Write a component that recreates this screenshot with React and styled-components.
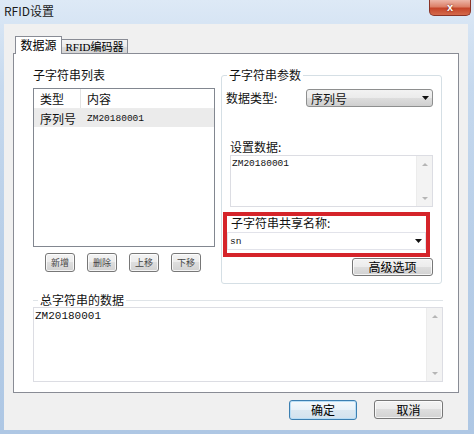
import React from 'react';
import styled, { createGlobalStyle } from 'styled-components';

const CJK = `"Noto Sans CJK SC", "Noto Sans", sans-serif`;
const MONO = `"Liberation Mono", "DejaVu Sans Mono", monospace`;
const SERIF = `"Liberation Serif", "Noto Sans CJK SC", serif`;

const GlobalStyle = createGlobalStyle`
  html, body { margin: 0; padding: 0; background: #b9cfe8; }
  body { font-family: ${CJK}; font-size: 12px; color: #000; }
  * { box-sizing: border-box; }
`;

const Window = styled.div`
  width: 474px;
  height: 434px;
  display: flex;
  flex-direction: column;
  overflow: hidden;
  background: linear-gradient(180deg, #dde9f6 0%, #c6d9ee 20%, #b6cde7 60%, #aec7e4 100%);
`;

const TitleBar = styled.div`
  height: 24px;
  flex: none;
  display: flex;
  justify-content: space-between;
  align-items: flex-start;
  padding-left: 4px;
`;

const Title = styled.div`
  font-family: ${CJK};
  font-size: 12px;
  line-height: 14px;
  margin-top: 4px;
  color: #1a1a1a;
`;

const CloseButton = styled.div`
  width: 42px;
  height: 16px;
  margin-right: 3px;
  border: 1px solid #8a3326;
  border-top: none;
  border-radius: 0 0 5px 5px;
  background: linear-gradient(180deg, #edb6a8 0%, #dc8068 45%, #c5452a 55%, #d46a4c 100%);
  color: #fff;
  font: bold 11px/15px "Liberation Sans", sans-serif;
  text-align: center;
  text-shadow: 0 0 2px #6a1a10;
`;

const Client = styled.div`
  flex: 1;
  margin: 0 6px 4px 4px;
  background: #f0f0f0;
  display: flex;
  flex-direction: column;
  padding: 12px 9px 0 9px;
`;

const TabRow = styled.div`
  display: flex;
  align-items: flex-end;
  height: 18px;
  padding-left: 2px;
  border-bottom: 1px solid #898c95;
`;

const Tab = styled.div`
  display: flex;
  align-items: center;
  justify-content: center;
  white-space: nowrap;
  width: ${p => p.$w}px;
  height: ${p => (p.$active ? 18 : 14)}px;
  margin-bottom: ${p => (p.$active ? -1 : 0)}px;
  border: 1px solid #898c95;
  border-bottom: none;
  ${p => (p.$active ? '' : 'border-left: none;')}
  background: ${p => (p.$active ? '#fff' : 'linear-gradient(180deg, #f3f3f3 0%, #ebebeb 50%, #dcdcdc 51%, #d4d4d4 100%)')};
  font-family: ${p => (p.$serif ? SERIF : CJK)};
  font-size: ${p => (p.$serif ? 11 : 12)}px;
  line-height: 14px;
  padding-bottom: ${p => (p.$active ? 1 : 0)}px;
`;

const TabPanel = styled.div`
  height: 339px;
  background: #fff;
  border: 1px solid #898c95;
  border-top: none;
  display: flex;
  flex-direction: column;
  padding: 14px 16px 10px 19px;
`;

const TopRow = styled.div`
  display: flex;
  align-items: flex-start;
  gap: 6px;
  height: 215px;
`;

const LeftColumn = styled.div`
  width: 182px;
  display: flex;
  flex-direction: column;
`;

const Label = styled.div`
  font-family: ${CJK};
  font-size: 12px;
  line-height: 14px;
  color: #111;
  ${p => (p.$width ? `width: ${p.$width}px; flex: none;` : '')}
`;

const ListBox = styled.div`
  margin-top: 6px;
  height: 159px;
  border: 1px solid #828790;
  background: #fff;
  display: flex;
  flex-direction: column;
`;

const ListRow = styled.div`
  display: grid;
  grid-template-columns: 47px 1fr;
  height: ${p => (p.$header ? 20 : 18)}px;
  align-items: center;
  background: ${p => (p.$selected ? '#ebebeb' : '#fff')};
  border-bottom: ${p => (p.$header ? '1px solid #ececec' : 'none')};
`;

const Cell = styled.div`
  height: 100%;
  display: flex;
  align-items: center;
  padding-left: 6px;
  font-family: ${p => (p.$mono ? MONO : CJK)};
  font-size: ${p => (p.$mono ? 9.5 : 12)}px;
  color: #111;
  border-right: ${p => (p.$divider ? '1px solid #e3e3e3' : 'none')};
`;

const ButtonRow = styled.div`
  display: flex;
  gap: 12px;
  margin-top: 6px;
  padding-left: 12px;
`;

const Button = styled.button`
  width: ${p => p.$w}px;
  height: ${p => p.$h}px;
  padding: 0;
  flex: none;
  font-family: ${CJK};
  font-size: ${p => p.$fs || 12}px;
  line-height: 1;
  color: ${p => (p.$fs ? '#444' : '#000')};
  border: 1px solid ${p => (p.$default ? '#3c7fb1' : '#777')};
  border-radius: 3px;
  background: ${p =>
    p.$default
      ? 'linear-gradient(180deg, #f4f9fc 0%, #e8f2f9 49%, #dbe8f1 50%, #d2e2ee 100%)'
      : 'linear-gradient(180deg, #f3f3f3 0%, #ececec 49%, #dedede 50%, #d2d2d2 100%)'};
  box-shadow: inset 0 0 0 1px ${p => (p.$default ? 'rgba(180,220,245,.9)' : 'rgba(255,255,255,.75)')};
  ${p => (p.$alignEnd ? 'align-self: flex-end; margin-right: 8px; margin-top: 1px;' : '')}
`;

const GroupBox = styled.fieldset`
  margin: 0;
  padding: 0 0 7px 0;
  min-width: 0;
  width: 221px;
  border: 1px solid #d5dfe5;
  border-radius: 3px;
  display: flex;
  flex-direction: column;
`;

const Legend = styled.legend`
  padding: 0 2px;
  margin-left: 5px;
  font-family: ${CJK};
  font-size: 12px;
  line-height: 14px;
  color: #111;
`;

const FieldRow = styled.div`
  display: flex;
  align-items: center;
  margin-top: 7px;
  padding-left: 4px;
`;

const Select = styled.div`
  display: flex;
  align-items: center;
  justify-content: space-between;
  height: 18px;
  width: ${p => (p.$w ? `${p.$w}px` : 'auto')};
  ${p => (p.$fill ? 'align-self: stretch;' : '')}
  margin-top: ${p => p.$mt || 0}px;
  padding: 0 3px 0 ${p => (p.$plain ? 2 : 4)}px;
  border: 1px solid ${p => (p.$plain ? '#e2e3ea' : '#8e8f8f')};
  border-radius: ${p => (p.$plain ? 0 : 3)}px;
  background: ${p => (p.$plain ? '#fff' : 'linear-gradient(180deg, #f2f2f2 0%, #ebebeb 50%, #dddddd 51%, #cfcfcf 100%)')};
  font-family: ${p => (p.$plain ? MONO : CJK)};
  font-size: ${p => (p.$plain ? 9.5 : 12)}px;
  color: #111;
`;

const FieldLabel = styled(Label)`
  margin-top: ${p => p.$mt || 0}px;
  padding-left: ${p => p.$pl || 0}px;
`;

const TextBox = styled.div`
  display: flex;
  height: ${p => p.$h}px;
  width: ${p => (p.$w ? `${p.$w}px` : '100%')};
  margin: ${p => p.$m || 0};
  border: 1px solid #dcdde3;
  background: #fff;
  flex: none;
`;

const TextContent = styled.div`
  flex: 1;
  padding: ${p => p.$pad || '1px 1px'};
  font-family: ${MONO};
  font-size: ${p => p.$fs}px;
  line-height: 14px;
  color: #111;
`;

const ScrollBar = styled.div`
  width: 16px;
  flex: none;
  background: #f3f3f3;
  border-left: 1px solid #ececec;
  display: flex;
  flex-direction: column;
  justify-content: space-between;
  align-items: center;
  padding: 7px 0 6px;
`;

const Highlight = styled.div`
  margin: 5px 0 0 1px;
  width: 207px;
  border: 4px solid #d5242a;
  padding: 0 0 3px 0;
  display: flex;
  flex-direction: column;
`;

const DataGroup = styled.fieldset`
  margin: 10px 0 0 0;
  padding: 0;
  min-width: 0;
  width: 410px;
  border: none;
  border-top: 1px solid #dfe4e8;
`;

const Footer = styled.div`
  display: flex;
  justify-content: flex-end;
  align-items: flex-start;
  gap: 17px;
  padding: 7px 16px 0 0;
`;

const Tri = ({ dir = 'down', color = '#111', w = 7, h = 4 }) => (
  <svg width={w} height={h} viewBox={`0 0 ${w} ${h}`}>
    {dir === 'down' ? (
      <polygon points={`0,0 ${w},0 ${w / 2},${h}`} fill={color} />
    ) : (
      <polygon points={`0,${h} ${w},${h} ${w / 2},0`} fill={color} />
    )}
  </svg>
);

const Scroll = () => (
  <ScrollBar>
    <Tri dir="up" color="#b5b5b5" w={6} h={3} />
    <Tri dir="down" color="#b5b5b5" w={6} h={3} />
  </ScrollBar>
);

export default function App() {
  return (
    <>
      <GlobalStyle />
      <Window>
        <TitleBar>
          <Title>RFID设置</Title>
          <CloseButton>x</CloseButton>
        </TitleBar>
        <Client>
          <TabRow>
            <Tab $active $w={47}>数据源</Tab>
            <Tab $w={66} $serif>RFID编码器</Tab>
          </TabRow>
          <TabPanel>
            <TopRow>
              <LeftColumn>
                <Label>子字符串列表</Label>
                <ListBox>
                  <ListRow $header>
                    <Cell $divider>类型</Cell>
                    <Cell>内容</Cell>
                  </ListRow>
                  <ListRow $selected>
                    <Cell>序列号</Cell>
                    <Cell $mono>ZM20180001</Cell>
                  </ListRow>
                </ListBox>
                <ButtonRow>
                  <Button $w={30} $h={19} $fs={9}>新增</Button>
                  <Button $w={30} $h={19} $fs={9}>删除</Button>
                  <Button $w={30} $h={19} $fs={9}>上移</Button>
                  <Button $w={30} $h={19} $fs={9}>下移</Button>
                </ButtonRow>
              </LeftColumn>
              <GroupBox>
                <Legend>子字符串参数</Legend>
                <FieldRow>
                  <Label $width={80}>数据类型:</Label>
                  <Select $w={127}>
                    <span>序列号</span>
                    <Tri />
                  </Select>
                </FieldRow>
                <FieldLabel $mt={33} $pl={8}>设置数据:</FieldLabel>
                <TextBox $h={52} $w={203} $m="1px 0 0 8px">
                  <TextContent $fs={9.5}>ZM20180001</TextContent>
                  <Scroll />
                </TextBox>
                <Highlight>
                  <FieldLabel $pl={4}>子字符串共享名称:</FieldLabel>
                  <Select $plain $fill $mt={2}>
                    <span>sn</span>
                    <Tri />
                  </Select>
                </Highlight>
                <Button $w={81} $h={18} $alignEnd>高级选项</Button>
              </GroupBox>
            </TopRow>
            <DataGroup>
              <Legend>总字符串的数据</Legend>
              <TextBox $h={75}>
                <TextContent $fs={11} $pad="1px 1px">ZM20180001</TextContent>
                <Scroll />
              </TextBox>
            </DataGroup>
          </TabPanel>
          <Footer>
            <Button $w={68} $h={20} $default>确定</Button>
            <Button $w={69} $h={19}>取消</Button>
          </Footer>
        </Client>
      </Window>
    </>
  );
}
